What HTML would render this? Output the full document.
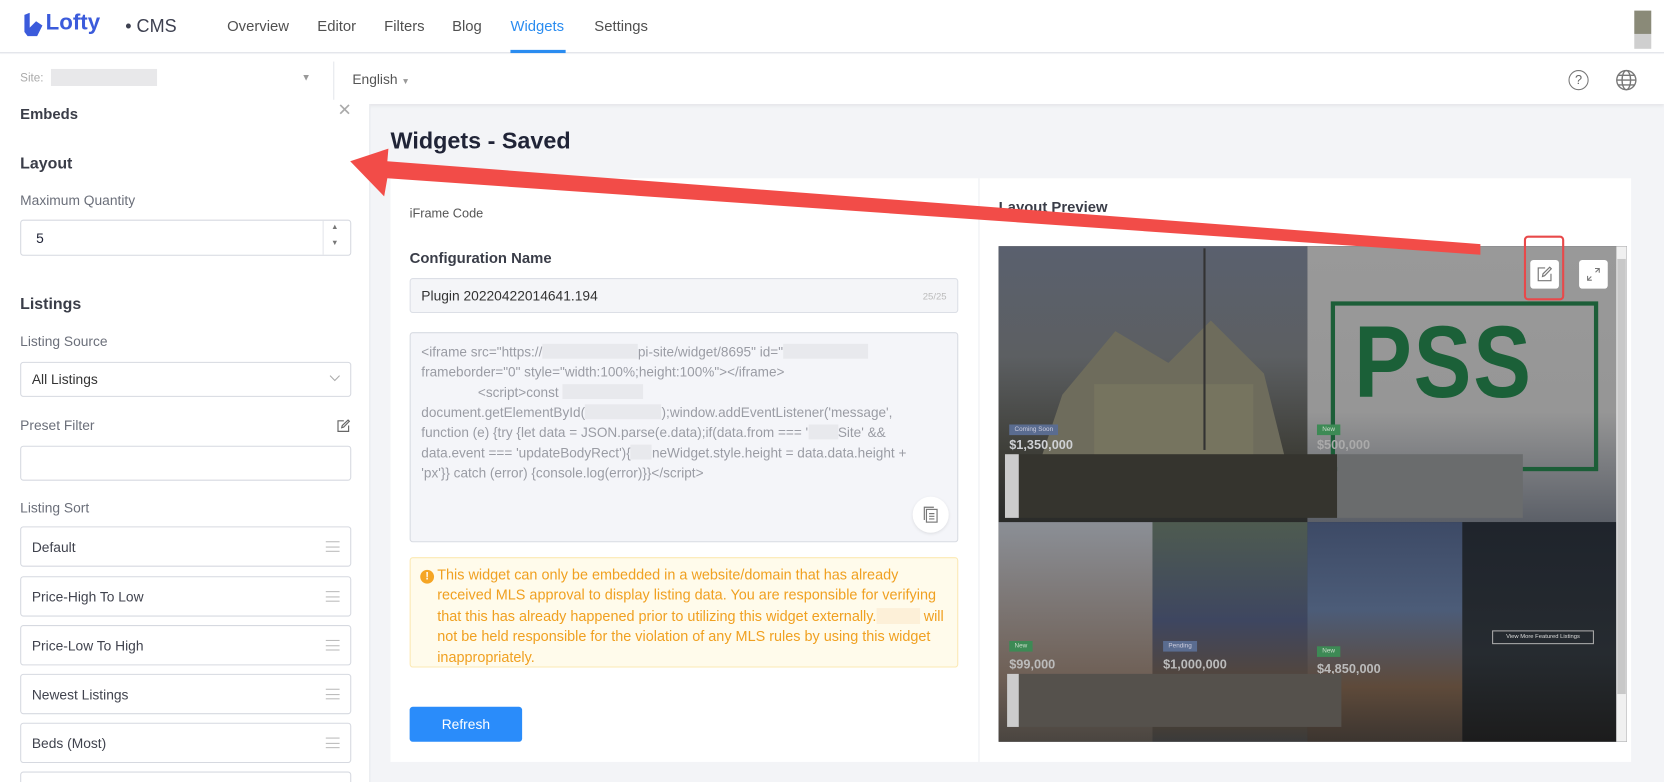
<!DOCTYPE html>
<html><head><meta charset="utf-8"><style>
*{box-sizing:border-box;margin:0;padding:0}
html,body{width:1664px;height:782px;overflow:hidden;background:#f3f4f7}
body{font-family:"Liberation Sans",sans-serif;color:#202437}
#w{position:absolute;left:0;top:0;width:1568px;height:737px;transform:scale(1.06122);transform-origin:0 0;background:#f3f4f7;overflow:hidden}
.a{position:absolute}
.nav{font-size:14px;color:#505050;top:16px}
.lbl{font-size:13px;color:#6b6f7a}
.h{font-size:15px;font-weight:bold;color:#3a3d48}
.box{border:1px solid #d6d9e0;border-radius:3px;background:#fff}
.sort{left:19px;width:312px;height:38px;font-size:13px;color:#40434e;padding:11px 10px}
.sort i{position:absolute;right:10px;top:13px;width:13px;height:10px;border-top:1px solid #bbb;border-bottom:1px solid #bbb}
.sort i:after{content:"";position:absolute;left:0;right:0;top:4px;border-top:1px solid #bbb}
.pix{position:absolute}
.bl{display:inline-block;height:14px;vertical-align:-2px;background:#e8e9ed}
</style></head><body><div id="w">
<div class="a" style="left:0;top:0;width:1568px;height:50px;background:#fff;border-bottom:1px solid #e4e6eb"></div>
<svg class="a" style="left:22px;top:12px" width="20" height="24" viewBox="0 0 20 24"><path d="M1 2 L6 0 L6 14 L12 8 L18 12 L13 22 L4 22 L1 18 Z" fill="#3b5bdb"/></svg>
<div class="a" style="left:43px;top:10px;font-size:21px;font-weight:bold;color:#3b5bdb">Lofty</div>
<div class="a" style="left:118px;top:15px;font-size:17px;color:#3d4050">• CMS</div>
<div class="a nav" style="left:214px">Overview</div>
<div class="a nav" style="left:299px">Editor</div>
<div class="a nav" style="left:362px">Filters</div>
<div class="a nav" style="left:426px">Blog</div>
<div class="a nav" style="left:481px;color:#2a8cf0">Widgets</div>
<div class="a" style="left:481px;top:47px;width:52px;height:3px;background:#2a8cf0"></div>
<div class="a nav" style="left:560px">Settings</div>
<div class="a" style="left:1540px;top:10px;width:16px;height:22px;background:#8a8a78"></div>
<div class="a" style="left:1540px;top:32px;width:16px;height:14px;background:#cfcfcf"></div>
<div class="a" style="left:0;top:51px;width:1568px;height:47px;background:#fff;box-shadow:0 2px 3px rgba(0,0,0,.06)"></div>
<div class="a" style="left:19px;top:68px;font-size:11px;color:#aaa">Site:</div>
<div class="a" style="left:48px;top:65px;width:100px;height:16px;background:#e8e8ea"></div>
<div class="a" style="left:284px;top:68px;font-size:9px;color:#999">▼</div>
<div class="a" style="left:314px;top:58px;width:1px;height:36px;background:#e4e6eb"></div>
<div class="a" style="left:332px;top:67px;font-size:13px;color:#555">English <span style="font-size:8px;color:#999">▼</span></div>
<div class="a" style="left:1478px;top:66px;width:19px;height:19px;border:1.3px solid #777;border-radius:50%;font-size:12px;color:#666;text-align:center;line-height:17px">?</div>
<svg class="a" style="left:1522px;top:65px" width="21" height="21" viewBox="0 0 21 21" fill="none" stroke="#777" stroke-width="1.3"><circle cx="10.5" cy="10.5" r="9"/><ellipse cx="10.5" cy="10.5" rx="4" ry="9"/><path d="M1.5 10.5H19.5M3 6H18M3 15H18"/></svg>
<div class="a" style="left:0;top:98px;width:349px;height:639px;background:#fff;border-right:1px solid #e4e6eb"></div>
<div class="a" style="left:19px;top:99px;font-size:14px;font-weight:bold;color:#3a3d48">Embeds</div>
<div class="a" style="left:318px;top:94px;font-size:16px;color:#aaa">✕</div>
<div class="a h" style="left:19px;top:146px">Layout</div>
<div class="a lbl" style="left:19px;top:181px">Maximum Quantity</div>
<div class="a box" style="left:19px;top:207px;width:312px;height:34px;font-size:13px;padding:9px 14px">5</div>
<div class="a" style="left:304px;top:208px;width:1px;height:32px;background:#e4e6eb"></div>
<div class="a" style="left:312px;top:211px;font-size:7px;color:#777">▲</div>
<div class="a" style="left:312px;top:226px;font-size:7px;color:#777">▼</div>
<div class="a h" style="left:19px;top:278px">Listings</div>
<div class="a lbl" style="left:19px;top:314px">Listing Source</div>
<div class="a box" style="left:19px;top:341px;width:312px;height:33px;font-size:13px;padding:8px 10px;color:#333">All Listings</div>
<svg class="a" style="left:310px;top:353px" width="11" height="7"><path d="M1 1L5.5 5.5L10 1" stroke="#aaa" fill="none"/></svg>
<div class="a lbl" style="left:19px;top:393px">Preset Filter</div>
<svg class="a" style="left:317px;top:395px" width="13" height="13" viewBox="0 0 13 13" fill="none" stroke="#666" stroke-width="1.1"><path d="M7 1.5H1.5V11.5H11.5V6"/><path d="M5 8L5.5 6L11 0.8L12.2 2L6.8 7.5Z"/></svg>
<div class="a box" style="left:19px;top:420px;width:312px;height:33px"></div>
<div class="a lbl" style="left:19px;top:471px">Listing Sort</div>
<div class="a box sort" style="top:496px">Default<i></i></div>
<div class="a box sort" style="top:543px">Price-High To Low<i></i></div>
<div class="a box sort" style="top:589px">Price-Low To High<i></i></div>
<div class="a box sort" style="top:635px">Newest Listings<i></i></div>
<div class="a box sort" style="top:681px">Beds (Most)<i></i></div>
<div class="a box sort" style="top:727px"></div>
<div class="a" style="left:368px;top:120px;font-size:22px;font-weight:bold;color:#202437">Widgets - Saved</div>
<div class="a" style="left:368px;top:168px;width:1169px;height:550px;background:#fff"></div>
<div class="a" style="left:922px;top:168px;width:1px;height:550px;background:#eceef2"></div>
<div class="a" style="left:386px;top:194px;font-size:12px;color:#555">iFrame Code</div>
<div class="a" style="left:386px;top:235px;font-size:14px;font-weight:bold;color:#3a3d48">Configuration Name</div>
<div class="a" style="left:386px;top:262px;width:517px;height:33px;background:#f4f5f8;border:1px solid #dcdfe6;border-radius:3px;font-size:13px;padding:8px 10px;color:#333">Plugin 20220422014641.194<span style="position:absolute;right:10px;top:11px;font-size:9px;color:#bbb">25/25</span></div>
<div class="a" style="left:386px;top:313px;width:517px;height:198px;background:#f4f5f9;border:1px solid #d8dbe2;border-radius:3px;font-size:12.8px;line-height:19px;color:#9a9ca4;padding:8px 10px;white-space:nowrap">&lt;iframe src="https://<span class="bl" style="width:90px"></span>pi-site/widget/8695" id="<span class="bl" style="width:80px"></span><br>frameborder="0" style="width:100%;height:100%"&gt;&lt;/iframe&gt;<br>&nbsp;&nbsp;&nbsp;&nbsp;&nbsp;&nbsp;&nbsp;&nbsp;&nbsp;&nbsp;&nbsp;&nbsp;&nbsp;&nbsp;&nbsp;&lt;script&gt;const <span class="bl" style="width:76px"></span><br>document.getElementById(<span class="bl" style="width:72px"></span>);window.addEventListener('message',<br>function (e) {try {let data = JSON.parse(e.data);if(data.from === '<span class="bl" style="width:28px"></span>Site' &amp;&amp;<br>data.event === 'updateBodyRect'){<span class="bl" style="width:20px"></span>neWidget.style.height = data.data.height +<br>'px'}} catch (error) {console.log(error)}}&lt;/script&gt;</div>
<div class="a" style="left:860px;top:468px;width:34px;height:34px;border-radius:50%;background:#fff;box-shadow:0 1px 3px rgba(0,0,0,.1)"></div>
<svg class="a" style="left:869px;top:477px" width="16" height="16" viewBox="0 0 16 16" fill="none" stroke="#777" stroke-width="1.1"><rect x="4" y="3" width="10" height="12"/><path d="M2 13V1H11M6.5 7H11.5M6.5 9.5H11.5M6.5 12H11.5"/></svg>
<div class="a" style="left:386px;top:525px;width:517px;height:104px;background:#fffbeb;border:1px solid #fbe9b3;border-radius:3px"></div>
<div class="a" style="left:396px;top:537px;width:13px;height:13px;border-radius:50%;background:#f5a524;color:#fff;font-size:10px;font-weight:bold;text-align:center;line-height:13px">!</div>
<div class="a" style="left:412px;top:532px;width:485px;font-size:13.6px;line-height:19.4px;color:#f0a020">This widget can only be embedded in a website/domain that has already received MLS approval to display listing data. You are responsible for verifying that this has already happened prior to utilizing this widget externally.<span style="background:#fdf0d8;color:#fdf0d8">xxxxxx</span> will not be held responsible for the violation of any MLS rules by using this widget inappropriately.</div>
<div class="a" style="left:386px;top:666px;width:106px;height:33px;background:#2a8cfa;border-radius:3px;color:#fff;font-size:13px;text-align:center;line-height:33px">Refresh</div>
<div class="a" style="left:941px;top:187px;font-size:14px;font-weight:bold;color:#3a3d48">Layout Preview</div>
<div class="a" style="left:941px;top:232px;width:592px;height:467px;background:#2a2d33;overflow:hidden">
 <div class="pix" style="left:0;top:0;width:291px;height:260px;background:linear-gradient(180deg,#5a606e 0%,#5c5f62 40%,#3e3e38 75%,#2a2b2a 100%)"></div>
 <svg class="pix" style="left:0;top:0" width="291" height="200"><path d="M60 140L110 80L160 110L200 70L250 120L270 200H40Z" fill="#6e6c5c"/><path d="M90 130H240V200H90Z" fill="#76745f"/><rect x="193" y="2" width="2" height="190" fill="#333"/></svg>
 <div class="pix" style="left:291px;top:0;width:291px;height:260px;background:linear-gradient(180deg,#999 0%,#969696 60%,#5c6068 100%)"></div>
 <div class="pix" style="left:313px;top:52px;width:252px;height:160px;border:4px solid #1c5e38"></div>
 <div class="pix" style="left:335px;top:55px;font-size:96px;font-weight:bold;color:#1b6038;letter-spacing:2px;transform:scaleX(0.85);transform-origin:0 0">PSS</div>
 <div class="pix" style="left:10px;top:168px;font-size:6px;background:#5a6c90;color:#ccd;padding:2px 5px">Coming Soon</div>
 <div class="pix" style="left:300px;top:168px;font-size:6px;background:#3d8a55;color:#cdc;padding:2px 5px">New</div>
 <div class="pix" style="left:10px;top:180px;font-size:12px;font-weight:bold;color:#cfd1d4">$1,350,000</div>
 <div class="pix" style="left:300px;top:180px;font-size:12px;font-weight:bold;color:#aaa">$500,000</div>
 <div class="pix" style="left:6px;top:196px;width:313px;height:60px;background:#35342e"></div>
 <div class="pix" style="left:6px;top:196px;width:13px;height:60px;background:#ccc"></div>
 <div class="pix" style="left:319px;top:196px;width:175px;height:60px;background:#6a6c6d"></div>
 <div class="pix" style="left:0;top:260px;width:145px;height:207px;background:linear-gradient(180deg,#8b8f96,#6f6056 70%,#4a4540)"></div>
 <div class="pix" style="left:145px;top:260px;width:146px;height:207px;background:linear-gradient(180deg,#4e5b50,#3e4660 45%,#5a4630 80%,#3a3a3a)"></div>
 <div class="pix" style="left:291px;top:260px;width:146px;height:207px;background:linear-gradient(180deg,#3d4a66,#4c5c78 40%,#5e4a3a 75%,#3c3530)"></div>
 <div class="pix" style="left:437px;top:260px;width:145px;height:207px;background:linear-gradient(180deg,#1f242c,#262b30 60%,#1c1c1c)"></div>
 <div class="pix" style="left:465px;top:362px;width:96px;height:13px;border:1px solid #aaa;font-size:5.5px;color:#ddd;text-align:center;line-height:11px">View More Featured Listings</div>
 <div class="pix" style="left:10px;top:372px;font-size:6px;background:#3d8a55;color:#cdc;padding:2px 5px">New</div>
 <div class="pix" style="left:155px;top:372px;font-size:6px;background:#5a6c90;color:#ccd;padding:2px 5px">Pending</div>
 <div class="pix" style="left:300px;top:377px;font-size:6px;background:#3d8a55;color:#cdc;padding:2px 5px">New</div>
 <div class="pix" style="left:10px;top:387px;font-size:12px;font-weight:bold;color:#bbb">$99,000</div>
 <div class="pix" style="left:155px;top:387px;font-size:12px;font-weight:bold;color:#bbb">$1,000,000</div>
 <div class="pix" style="left:300px;top:391px;font-size:12px;font-weight:bold;color:#bbb">$4,850,000</div>
 <div class="pix" style="left:8px;top:403px;width:315px;height:50px;background:#55514c"></div>
 <div class="pix" style="left:8px;top:403px;width:11px;height:50px;background:#ccc"></div>
 <div class="pix" style="left:582px;top:0;width:10px;height:467px;background:#f0f0f0"></div>
 <div class="pix" style="left:583px;top:12px;width:8px;height:410px;background:#c8c8c8"></div>
</div>
<div class="a" style="left:1442px;top:245px;width:27px;height:27px;background:#fff;border-radius:3px"></div>
<svg class="a" style="left:1448px;top:251px" width="15" height="15" viewBox="0 0 15 15" fill="none" stroke="#777" stroke-width="1.1"><path d="M8 1.5H1.5V13.5H13.5V7"/><path d="M5.5 9.5L6 7L12.3 0.8L13.8 2.3L7.5 8.8Z"/></svg>
<div class="a" style="left:1488px;top:245px;width:27px;height:27px;background:#fff;border-radius:3px"></div>
<svg class="a" style="left:1494px;top:251px" width="15" height="15" viewBox="0 0 15 15" fill="none" stroke="#777" stroke-width="1"><path d="M9 2H13V6M13 2L9.5 5.5M6 13H2V9M2 13L5.5 9.5"/></svg>
<div class="a" style="left:1436px;top:222px;width:38px;height:61px;border:2.5px solid #e8494a;border-radius:4px"></div>
<svg class="a" style="left:0;top:0" width="1568" height="737"><path d="M1395 230 L1395 240 L365 168 L362 185 L330 152 L366 140 L365 152 Z" fill="#f24c48"/></svg>
</div></body></html>
